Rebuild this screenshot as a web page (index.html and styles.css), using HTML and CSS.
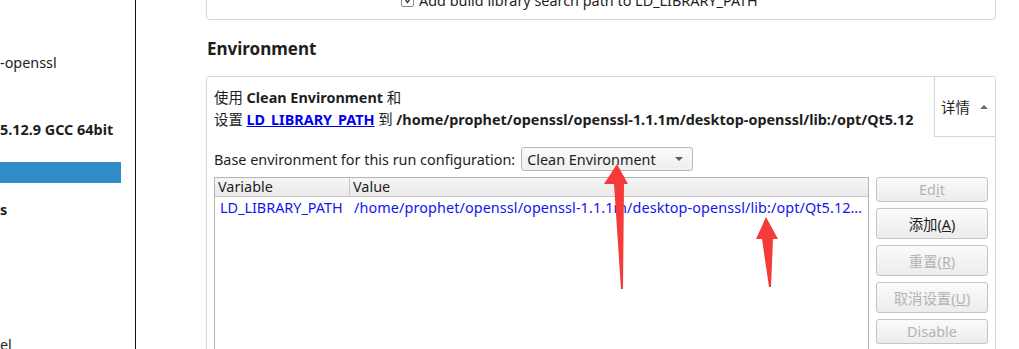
FILE: index.html
```html
<!DOCTYPE html>
<html lang="zh-CN">
<head>
    <meta charset="UTF-8">
    <title>Run Settings - Environment</title>
    <link rel="stylesheet" href="styles.css">
</head>
<body>
    <div class="window">
        <aside class="sidebar">
            <div class="side-item kit-name">-openssl</div>
            <div class="side-item kit-title">5.12.9 GCC 64bit</div>
            <div class="side-item selected"></div>
            <div class="side-item section">s</div>
            <div class="side-item last">el</div>
        </aside>

        <main class="settings">
            <div class="group-box">
                <label class="check-row">
                    <span class="checkbox">
                        <svg width="9" height="8" viewBox="0 0 9 8"><path d="M1 1.5 L4.5 6.5 L8 1.5" fill="none" stroke="#3c3c3c" stroke-width="1.4"/></svg>
                    </span>
                    Add build library search path to LD_LIBRARY_PATH
                </label>
            </div>

            <h2 class="section-title">Environment</h2>

            <div class="details">
                <div class="details-head">
                    <div class="summary">
                        <div>使用 <b>Clean Environment</b> 和</div>
                        <div>设置 <a class="var-link" href="#">LD_LIBRARY_PATH</a> 到 <b>/home/prophet/openssl/openssl-1.1.1m/desktop-openssl/lib:/opt/Qt5.12</b></div>
                    </div>
                    <button class="details-toggle">详情<span class="tri"></span></button>
                </div>

                <div class="details-body">
                    <div class="base-row">
                        <span>Base environment for this run configuration:</span>
                        <div class="combo">
                            Clean Environment
                            <span class="combo-arrow"></span>
                        </div>
                    </div>

                    <div class="env-editor">
                        <div class="env-table">
                            <div class="env-header">
                                <div class="col-var">Variable</div>
                                <div class="col-val">Value</div>
                            </div>
                            <div class="env-row">
                                <div class="col-var">LD_LIBRARY_PATH</div>
                                <div class="col-val">/home/prophet/openssl/openssl-1.1.1m/desktop-openssl/lib:/opt/Qt5.12…</div>
                            </div>
                        </div>
                        <div class="env-buttons">
                            <button class="btn short" disabled>Ed<u>i</u>t</button>
                            <button class="btn">添加(<u>A</u>)</button>
                            <button class="btn" disabled>重置(<u>R</u>)</button>
                            <button class="btn" disabled>取消设置(<u>U</u>)</button>
                            <button class="btn short" disabled>Disable</button>
                        </div>
                    </div>
                </div>
            </div>
        </main>

        <svg class="marks" width="1019" height="349" viewBox="0 0 1019 349">
            <path d="M617 164 L628 184 L624 184 L623 289 L621 289 L614 184 L604 184 Z" fill="#f53a3a"/>
            <path d="M766 217 L778 239 L773 239 L771 287 L769 287 L762 239 L756 239 Z" fill="#f53a3a"/>
        </svg>
    </div>
</body>
</html>
```

FILE: styles.css
```css
body {
    margin: 0;
    background-color: #fff;
    font-family: "Noto Sans", "Noto Sans CJK SC", sans-serif;
    font-size: 14.4px;
    color: #1e1e1e;
}
.window {
    position: relative;
    display: flex;
    width: 1019px;
    height: 349px;
    overflow: hidden;
}
.sidebar {
    width: 135px;
    flex-shrink: 0;
    border-right: 1px solid #111;
    white-space: nowrap;
    overflow: hidden;
}
.side-item {
    height: 20px;
    line-height: 20px;
}
.kit-name {
    margin-top: 53px;
}
.kit-title {
    margin-top: 47px;
    font-weight: bold;
}
.selected {
    margin-top: 22px;
    width: 121px;
    height: 21px;
    background-color: #308cc6;
}
.section {
    margin-top: 17px;
    font-weight: bold;
}
.last {
    margin-top: 115px;
}
.settings {
    flex-grow: 1;
    min-width: 0;
    padding: 0 23px 0 70px;
}
.group-box {
    margin-top: -12px;
    height: 30px;
    border: 1px solid #d6d6d6;
    border-radius: 4px;
}
.check-row {
    display: flex;
    align-items: center;
    gap: 5px;
    padding-left: 194px;
    height: 22px;
    white-space: nowrap;
}
.checkbox {
    display: flex;
    align-items: center;
    justify-content: center;
    width: 11px;
    height: 11px;
    border: 1px solid #8a8a8a;
    border-radius: 2px;
    background: #fff;
}
.section-title {
    margin: 0;
    padding: 17px 0 0 1px;
    height: 39px;
    line-height: 24px;
    font-size: 17px;
    font-weight: bold;
}
.details {
    border: 1px solid #d6d6d6;
    border-radius: 3px;
    height: 300px;
}
.details-head {
    display: flex;
    height: 60px;
}
.summary {
    flex-grow: 1;
    min-width: 0;
    margin-right: 6px;
    padding: 10px 0 0 7px;
    line-height: 22px;
    white-space: nowrap;
    overflow: hidden;
}
.var-link {
    color: #0000ee;
    font-weight: bold;
}
.details-toggle {
    width: 61px;
    flex-shrink: 0;
    border: none;
    border-left: 1px solid #d6d6d6;
    border-bottom: 1px solid #d6d6d6;
    background: #fff;
    font-family: inherit;
    font-size: 14.4px;
    color: #1e1e1e;
    display: flex;
    align-items: center;
    gap: 10px;
    padding: 0 0 0 6px;
}
.tri {
    width: 0;
    height: 0;
    border-left: 4px solid transparent;
    border-right: 4px solid transparent;
    border-bottom: 4px solid #6a6a6a;
}
.details-body {
    padding: 10px 7px 0 7px;
}
.base-row {
    display: flex;
    align-items: center;
    gap: 6px;
    height: 24px;
}
.combo {
    display: flex;
    align-items: center;
    justify-content: space-between;
    width: 156px;
    height: 22px;
    padding: 0 9px 0 5px;
    border: 1px solid #b9b9b9;
    border-radius: 3px;
    background: linear-gradient(#fbfbfb, #eeeeee);
}
.combo-arrow {
    width: 0;
    height: 0;
    border-left: 4px solid transparent;
    border-right: 4px solid transparent;
    border-top: 4px solid #5a5a5a;
}
.env-editor {
    display: flex;
    gap: 7px;
    margin-top: 6px;
}
.env-table {
    width: 653px;
    height: 180px;
    border: 1px solid #b5b5b5;
    background: #fff;
}
.env-header {
    display: flex;
    height: 18px;
    line-height: 18px;
    background: linear-gradient(#f6f6f6, #e9e9e9);
    border-bottom: 1px solid #c8c8c8;
}
.env-header .col-var {
    border-right: 1px solid #c8c8c8;
}
.col-var {
    width: 131px;
    padding-left: 3px;
    flex-shrink: 0;
}
.col-val {
    padding-left: 3px;
    white-space: nowrap;
    overflow: hidden;
}
.env-row {
    display: flex;
    height: 21px;
    line-height: 21px;
    color: #1414f0;
}
.env-row .col-var {
    padding-left: 5px;
    width: 129px;
}
.env-row .col-val {
    padding-left: 5px;
    letter-spacing: 0.1px;
}
.env-buttons {
    display: flex;
    flex-direction: column;
    gap: 6px;
    width: 112px;
}
.btn {
    height: 31px;
    border: 1px solid #c4c4c4;
    border-radius: 3px;
    background: linear-gradient(#fbfbfb, #ececec);
    font-family: inherit;
    font-size: 14.4px;
    color: #1e1e1e;
    padding: 0;
}
.btn.short {
    height: 25px;
}
.btn:disabled {
    color: #b4b4b4;
}
.marks {
    position: absolute;
    left: 0;
    top: 0;
    pointer-events: none;
}
```
